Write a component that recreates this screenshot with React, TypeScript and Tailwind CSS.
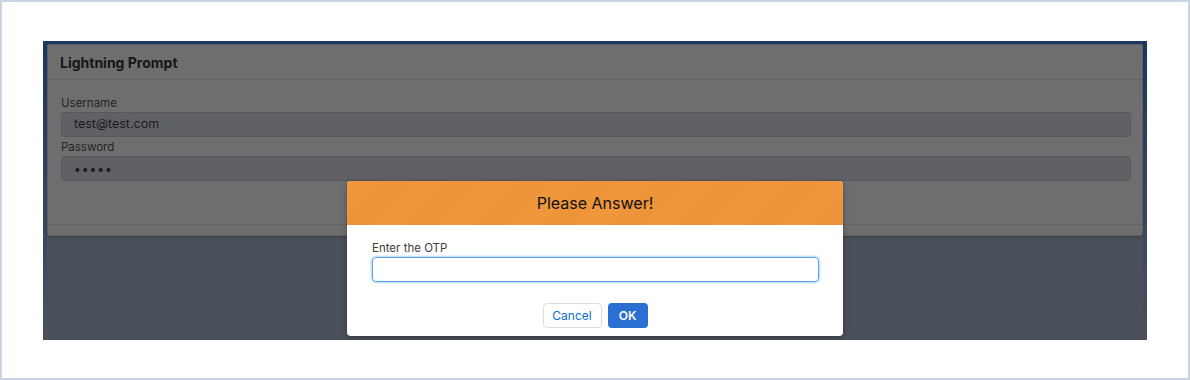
export default function App() {
  const font = { fontFamily: 'Inter, "Liberation Sans", Arial, sans-serif' }
  return (
    <div className="w-[1190px] h-[380px] bg-white border-2 border-[#c9d5e4] pl-[41px] pt-[39px]" style={font}>
      <div className="relative w-[1104px] h-[299px] bg-[#4b515c] overflow-hidden">
        {/* fondo superior */}
        <div className="absolute left-0 top-0 w-full h-[3px] bg-[#1c3761]" />
        <div className="absolute left-0 top-0 h-full w-[4px] bg-gradient-to-b from-[#1c3761] to-[#4b515c]" />
        <div className="absolute right-0 top-0 h-full w-[4px] bg-gradient-to-b from-[#1c3761] to-[#4b515c]" />

        {/* Tarjeta */}
        <div className="relative ml-[4px] mt-[3px] w-[1096px] h-[192px] bg-[#6e6e6e] border border-[#606060] rounded-[3px] shadow-[0_2px_2px_rgba(0,0,0,0.15)]">
          <div className="h-[35px] border-b border-[#636363] flex items-center pl-[12px]">
            <h1 className="text-[14px] font-bold text-[#161616]">Lightning Prompt</h1>
          </div>
          <div className="px-[13px] pt-[15px]">
            <label className="block text-[11.5px] leading-[16px] text-[#242424]">Username</label>
            <div className="mt-[1px] h-[25px] w-[1070px] bg-[#606167] border border-[#58595e] rounded-[4px] flex items-center pl-[12px] text-[12.5px] text-[#1a1a1a]">
              test@test.com
            </div>
            <label className="block mt-[2px] text-[11.5px] leading-[16px] text-[#242424]">Password</label>
            <div className="mt-[1px] h-[25px] w-[1070px] bg-[#606167] border border-[#58595e] rounded-[4px] flex items-center pl-[12px] text-[12px] tracking-[1px] text-[#1a1a1a]">
              •••••
            </div>
          </div>
          <div className="absolute left-0 right-0 bottom-[10px] border-t border-[#636363]" />
        </div>

        {/* Modal */}
        <div className="absolute left-[304px] top-[140px] w-[496px] h-[155px] bg-white rounded-[4px] overflow-hidden shadow-[0_2px_6px_rgba(0,0,0,0.3)]">
          <div className="h-[44px] bg-[#f0953a] bg-[repeating-linear-gradient(135deg,rgba(255,255,255,0.015)_0px,rgba(255,255,255,0.015)_24px,rgba(0,0,0,0.01)_24px,rgba(0,0,0,0.01)_48px)] flex items-center justify-center">
            <h2 className="text-[16px] text-[#111111]">Please Answer!</h2>
          </div>
          <div className="px-[25px] pt-[15px]">
            <label className="block text-[11.5px] leading-[16px] text-[#3e3e3c]">Enter the OTP</label>
            <input
              className="mt-[1px] block w-[447px] h-[25px] rounded-[4px] border border-[#5aa2f3] shadow-[0_0_2px_1px_rgba(90,162,243,0.45)] outline-none px-[10px] text-[13px]"
            />
            <div className="flex justify-center gap-[6px] mt-[21px]">
              <button className="h-[25px] w-[59px] rounded-[4px] border border-[#d8dde6] bg-white text-[12px] text-[#0b6fd0]">
                Cancel
              </button>
              <button className="h-[25px] w-[40px] rounded-[4px] bg-[#2b6fd3] text-[12px] font-semibold text-white">
                OK
              </button>
            </div>
          </div>
        </div>
      </div>
    </div>
  )
}
